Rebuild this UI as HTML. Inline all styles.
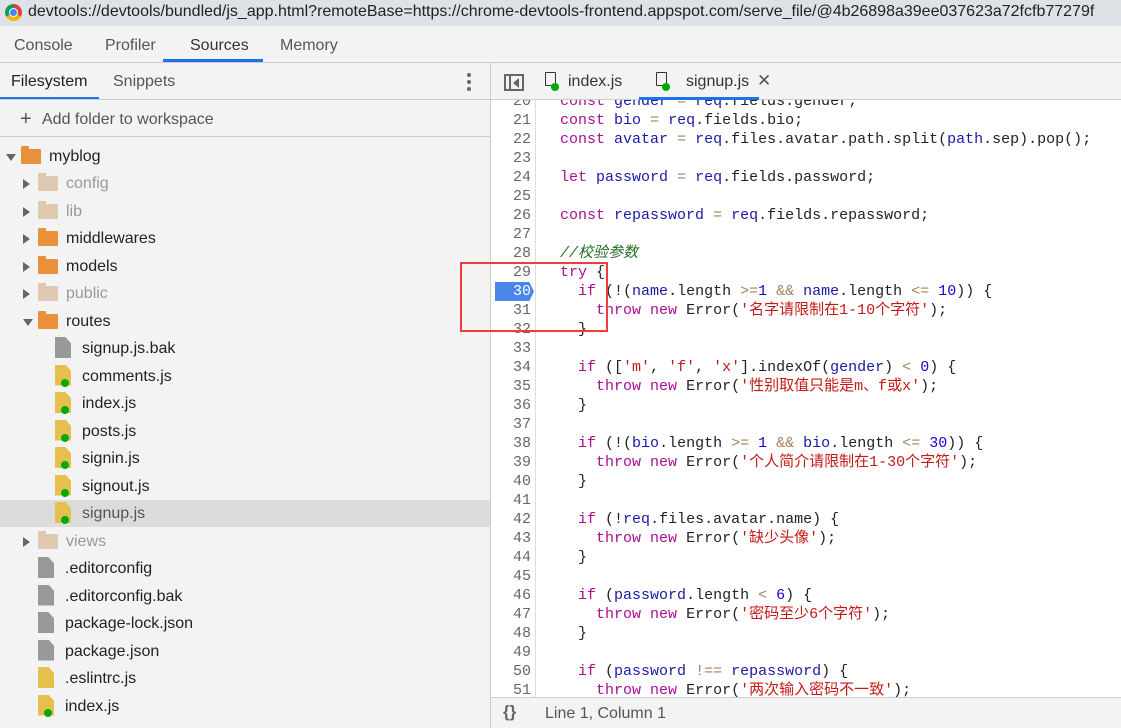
<!DOCTYPE html><html><head><meta charset="utf-8"><style>
*{margin:0;padding:0;box-sizing:border-box}
body{width:1121px;height:728px;overflow:hidden;background:#fff;font-family:"Liberation Sans","Noto Sans CJK SC",sans-serif;position:relative;color:#333}
.abs{position:absolute}
#title{left:0;top:0;width:1121px;height:26px;background:#dee1e6;font-size:16px;color:#222;white-space:nowrap;line-height:24px;padding-left:28px;overflow:hidden}
#tabs{left:0;top:26px;width:1121px;height:37px;background:#f3f3f3;border-bottom:1px solid #ccc;font-size:16px;color:#555}
#tabs span{position:absolute;top:11px}
#left{left:0;top:63px;width:491px;height:665px;background:#f3f3f3;border-right:1px solid #ccc}
.row{position:absolute;left:0;width:490px;height:27px;font-size:16px;line-height:27px;color:#222}
.tri{position:absolute;top:9px;width:0;height:0;border-top:5px solid transparent;border-bottom:5px solid transparent;border-left:7px solid #666}
.trid{position:absolute;top:11px;width:0;height:0;border-left:5px solid transparent;border-right:5px solid transparent;border-top:7px solid #666}
.fold{position:absolute;top:6px;width:20px;height:15px;border-radius:1px}
.fold:before{content:"";position:absolute;left:0;top:-3px;width:8px;height:4px;background:inherit;border-radius:1px 1px 0 0}
.file{position:absolute;top:2px;width:16px;height:21px;clip-path:polygon(0 0,65% 0,100% 30%,100% 100%,0 100%)}
.dot{position:absolute;top:16px;width:8px;height:8px;border-radius:50%;background:#0a0}
#editor{left:491px;top:63px;width:630px;height:665px;background:#fff}
#etabs{left:0;top:0;width:630px;height:37px;background:#f3f3f3;border-bottom:1px solid #ccc;font-size:16px;color:#333}
#gut{left:0;top:37px;width:45px;height:597px;background:#fff;border-right:1px solid #ddd}
#code{left:0;top:37px;width:630px;height:597px;overflow:hidden}
.ln{position:absolute;left:0;width:40px;text-align:right;font-family:"Liberation Mono",monospace;font-size:15px;color:#666;height:19px;line-height:19px}
.cl{position:absolute;left:69px;font-family:"Liberation Mono","Noto Sans CJK SC",monospace;font-size:15px;white-space:pre;height:19px;line-height:19px;color:#222}
.k{color:#aa0d91}.v{color:#1a1aa6}.s{color:#c41a16}.n{color:#1c00cf}.o{color:#a67f59}.c{color:#236e25;font-style:italic}
#status{left:0;top:634px;width:630px;height:31px;background:#f3f3f3;border-top:1px solid #ccc;font-size:16px;color:#555}
</style></head><body>
<div id="title" class="abs"><div class="abs" style="left:5px;top:4px;width:17px;height:17px;border-radius:50%;background:conic-gradient(#db4437 0 120deg,#f4b400 120deg 240deg,#0f9d58 240deg);"><div class="abs" style="left:4px;top:4px;width:9px;height:9px;border-radius:50%;background:#4285f4;border:1.5px solid #fff"></div></div>devtools://devtools/bundled/js_app.html?remoteBase=https://chrome-devtools-frontend.appspot.com/serve_file/@4b26898a39ee037623a72fcfb77279f</div>
<div id="tabs" class="abs"><span style="left:14px">Console</span><span style="left:105px">Profiler</span><span style="left:190px;color:#333">Sources</span><span style="left:280px">Memory</span><div class="abs" style="left:163px;top:33px;width:100px;height:3px;background:#1a73e8"></div></div>
<div id="left" class="abs">
<div class="abs" style="left:0;top:0;width:490px;height:37px;border-bottom:1px solid #ccc;font-size:16px">
<span class="abs" style="left:11px;top:10px;color:#222">Filesystem</span><span class="abs" style="left:113px;top:10px;color:#555">Snippets</span>
<div class="abs" style="left:0;top:34px;width:99px;height:2px;background:#1a73e8"></div>
<div class="abs" style="left:467px;top:10px;width:4px;height:4px;border-radius:50%;background:#666;box-shadow:0 7px 0 #666,0 14px 0 #666"></div></div>
<div class="abs" style="left:0;top:37px;width:490px;height:37px;border-bottom:1px solid #ccc;font-size:16px;color:#555"><span class="abs" style="left:20px;top:9px;font-size:20px;line-height:20px">+</span><span class="abs" style="left:42px;top:11px">Add folder to workspace</span></div>
</div>
<div id="rows"></div>
<div id="editor" class="abs">
<div id="etabs" class="abs">
<div class="abs" style="left:13px;top:11px;width:20px;height:17px;border:2px solid #666"></div><div class="abs" style="left:18px;top:11px;width:2px;height:17px;background:#666"></div><div class="abs" style="left:22px;top:15px;width:0;height:0;border-top:5px solid transparent;border-bottom:5px solid transparent;border-right:6px solid #666"></div>
<div class="abs" style="left:54px;top:9px;width:11px;height:14px;border:1.5px solid #333;border-radius:1px"></div><div class="dot" style="left:60px;top:20px"></div><span class="abs" style="left:77px;top:10px">index.js</span>
<div class="abs" style="left:165px;top:9px;width:11px;height:14px;border:1.5px solid #333;border-radius:1px"></div><div class="dot" style="left:171px;top:20px"></div><span class="abs" style="left:195px;top:10px">signup.js</span><span class="abs" style="left:266px;top:8px;font-size:17px;color:#555">✕</span>
<div class="abs" style="left:148px;top:34px;width:120px;height:3px;background:#1a73e8"></div>
</div>
<div id="gut" class="abs"></div>
<div id="code" class="abs"></div>
<div id="status" class="abs"><span class="abs" style="left:12px;top:4px;font-weight:bold;font-size:17px;color:#666">{}</span><span class="abs" style="left:54px;top:7px">Line 1, Column 1</span></div>
</div>
<div class="abs" style="left:460px;top:262px;width:148px;height:70px;border:2px solid #f03c3c"></div>
<script>
var R=document.getElementById('rows');
var items=[[0,'fo','myblog',1,'#e8913a'],[1,'fc','config',0,'#dfc8b0'],[1,'fc','lib',0,'#dfc8b0'],[1,'fc','middlewares',0,'#e8913a'],[1,'fc','models',0,'#e8913a'],[1,'fc','public',0,'#dfc8b0'],[1,'fo','routes',1,'#e8913a'],
[2,'g','signup.js.bak'],[2,'y','comments.js',1],[2,'y','index.js',1],[2,'y','posts.js',1],[2,'y','signin.js',1],[2,'y','signout.js',1],[2,'y','signup.js',1],
[1,'fc','views',0,'#dfc8b0'],[1,'g','.editorconfig'],[1,'g','.editorconfig.bak'],[1,'g','package-lock.json'],[1,'g','package.json'],[1,'y','.eslintrc.js'],[1,'y','index.js',1]];
items.forEach(function(it,i){var t=142.5+i*27.5,l=it[0],x=l*17;var s='<div class="row" style="top:'+t+'px;'+(i==13?'background:#dcdcdc;':'')+'">';
var grey=(it[4]=='#dfc8b0')||i==13;
if(it[1][0]=='f'){s+='<div class="'+(it[1]=='fo'?'trid':'tri')+'" style="left:'+(x+6)+'px"></div><div class="fold" style="left:'+(x+21)+'px;background:'+it[4]+'"></div><span style="position:absolute;left:'+(x+49)+'px;color:'+(grey?'#999':'#222')+'">'+it[2]+'</span>';}
else{var fx=l==2?55:38;s+='<div class="file" style="left:'+fx+'px;background:'+(it[1]=='g'?'#999':'#e6c04e')+'"></div>'+(it[3]?'<div class="dot" style="left:'+(fx+6)+'px"></div>':'')+'<span style="position:absolute;left:'+(fx+27)+'px;color:'+(i==13?'#555':'#222')+'">'+it[2]+'</span>';}
R.innerHTML+=s+'</div>';});
var L={20:'<span class="k">const</span> <span class="v">gender</span> <span class="o">=</span> <span class="v">req</span>.fields.gender;',21:'<span class="k">const</span> <span class="v">bio</span> <span class="o">=</span> <span class="v">req</span>.fields.bio;',22:'<span class="k">const</span> <span class="v">avatar</span> <span class="o">=</span> <span class="v">req</span>.files.avatar.path.split(<span class="v">path</span>.sep).pop();',24:'<span class="k">let</span> <span class="v">password</span> <span class="o">=</span> <span class="v">req</span>.fields.password;',26:'<span class="k">const</span> <span class="v">repassword</span> <span class="o">=</span> <span class="v">req</span>.fields.repassword;',28:'<span class="c">//校验参数</span>',29:'<span class="k">try</span> {',30:'  <span class="k">if</span> (!(<span class="v">name</span>.length <span class="o">&gt;=</span><span class="n">1</span> <span class="o">&amp;&amp;</span> <span class="v">name</span>.length <span class="o">&lt;=</span> <span class="n">10</span>)) {',31:'    <span class="k">throw</span> <span class="k">new</span> Error(<span class="s">\'名字请限制在1-10个字符\'</span>);',32:'  }',34:'  <span class="k">if</span> ([<span class="s">\'m\'</span>, <span class="s">\'f\'</span>, <span class="s">\'x\'</span>].indexOf(<span class="v">gender</span>) <span class="o">&lt;</span> <span class="n">0</span>) {',35:'    <span class="k">throw</span> <span class="k">new</span> Error(<span class="s">\'性别取值只能是m、f或x\'</span>);',36:'  }',38:'  <span class="k">if</span> (!(<span class="v">bio</span>.length <span class="o">&gt;=</span> <span class="n">1</span> <span class="o">&amp;&amp;</span> <span class="v">bio</span>.length <span class="o">&lt;=</span> <span class="n">30</span>)) {',39:'    <span class="k">throw</span> <span class="k">new</span> Error(<span class="s">\'个人简介请限制在1-30个字符\'</span>);',40:'  }',42:'  <span class="k">if</span> (!<span class="v">req</span>.files.avatar.name) {',43:'    <span class="k">throw</span> <span class="k">new</span> Error(<span class="s">\'缺少头像\'</span>);',44:'  }',46:'  <span class="k">if</span> (<span class="v">password</span>.length <span class="o">&lt;</span> <span class="n">6</span>) {',47:'    <span class="k">throw</span> <span class="k">new</span> Error(<span class="s">\'密码至少6个字符\'</span>);',48:'  }',50:'  <span class="k">if</span> (<span class="v">password</span> <span class="o">!==</span> <span class="v">repassword</span>) {',51:'    <span class="k">throw</span> <span class="k">new</span> Error(<span class="s">\'两次输入密码不一致\'</span>);'};
var c='';for(var n=20;n<=51;n++){var t=(n-20)*19-8;
if(n==30)c+='<div class="abs" style="left:4px;top:'+t+'px;width:39px;height:19px;background:#4a86e8;clip-path:polygon(0 0,88% 0,100% 50%,88% 100%,0 100%)"></div><div class="ln" style="top:'+t+'px;color:#fff">30</div>';
else c+='<div class="ln" style="top:'+t+'px">'+n+'</div>';
if(L[n])c+='<div class="cl" style="top:'+t+'px">'+L[n]+'</div>';}
document.getElementById('code').innerHTML=c;
</script>
</body></html>
